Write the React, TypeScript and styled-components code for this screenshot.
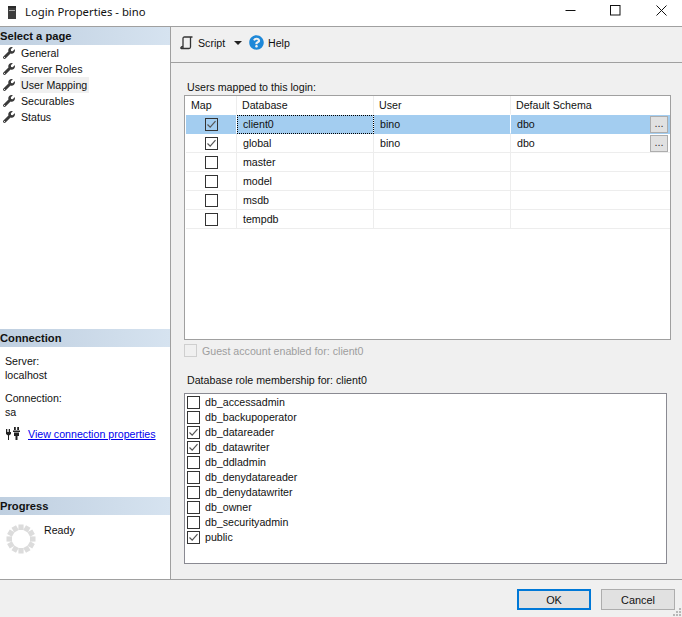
import React from "react";
import styled, { createGlobalStyle } from "styled-components";
import { FaWrench, FaQuestionCircle } from "react-icons/fa";

const Global = createGlobalStyle`
  html, body { margin: 0; padding: 0; background: #f0f0f0; }
  body { font: 10.65px/14px "Liberation Sans", Arial, sans-serif; color: #111; }
  * { box-sizing: border-box; }
`;
const Win = styled.div`
  width: 682px; height: 617px; display: flex; flex-direction: column; position: relative; overflow: hidden;
`;
const TitleBar = styled.header`
  height: 27px; flex: none; background: #fff; border-bottom: 1px solid #a0a0a0;
  display: flex; align-items: center; padding: 0 0 2px 8px;
`;
const AppGlyph = styled.div`
  width: 8px; height: 13px; background: #3c3c3c; border-top: 2px solid #2a2a2a; margin-right: 9px; flex: none; position: relative;
  &::after { content: ""; position: absolute; left: 1px; right: 1px; top: 2px; height: 1px; background: #aaa; }
`;
const TitleText = styled.div`
  flex: 1; font: 11.3px/16px "Noto Sans", "Open Sans", sans-serif; color: #111;
`;
const WinButtons = styled.div`
  display: flex; align-items: center; gap: 35px; padding: 0 15px 3px 0;
  svg { display: block; }
`;
const MaxWrap = styled.span`
  display: block; margin-left: -1px;
`;
const Body = styled.div`
  flex: 1; display: flex; min-height: 0;
`;
const Side = styled.aside`
  width: 171px; flex: none; background: #fff; border-right: 1px solid #a0a0a0; display: flex; flex-direction: column;
`;
const SideSection = styled.section<{ $h: number }>`
  height: ${p => p.$h}px; flex: none;
`;
const SideHead = styled.div`
  height: 18px; background: linear-gradient(90deg, #bfcfe0 0%, #d6e3f0 100%);
  font-size: 11.2px; font-weight: 700; line-height: 18px; color: #111;
`;
const NavList = styled.nav`
  display: flex; flex-direction: column;
`;
const NavRow = styled.div`
  height: 16px; display: flex; align-items: center; padding-left: 3px; gap: 5px;
  svg { color: #3a3a3a; flex: none; }
`;
const NavLabel = styled.span<{ $active?: boolean }>`
  padding: 0 2px 0 1px; line-height: 16px; ${p => p.$active && "background: #f0f0f0;"}
`;
const ConnBody = styled.div`
  padding: 7px 0 0 5px; display: flex; flex-direction: column;
`;
const InfoBlock = styled.div`
  margin-bottom: 9px; line-height: 14px;
`;
const LinkRow = styled.div`
  display: flex; align-items: center; gap: 7px; padding-left: 1px; margin-top: -1px;
`;
const LinkText = styled.a`
  color: #0000ee; text-decoration: underline; white-space: nowrap;
`;
const ProgBody = styled.div`
  display: flex; padding: 9px 0 0 6px; gap: 8px;
`;
const ReadyText = styled.span`
  line-height: 14px; margin-top: -1px;
`;
const Main = styled.main`
  flex: 1; min-width: 0; display: flex; flex-direction: column;
`;
const Toolbar = styled.div`
  height: 36px; flex: none; border-bottom: 1px solid #a0a0a0; display: flex; align-items: center; padding: 0 0 4px 9px;
`;
const ToolText = styled.span<{ $gap: number; $w?: number }>`
  margin-left: ${p => p.$gap}px; ${p => p.$w && `width: ${p.$w}px;`}
`;
const ArrowDown = styled.span`
  width: 0; height: 0; border-left: 4.5px solid transparent; border-right: 4.5px solid transparent; border-top: 4.5px solid #222;
  margin: 1px 7px 0 10px;
`;
const Content = styled.div`
  flex: 1; display: flex; flex-direction: column; padding: 17px 0 0 13px;
`;
const SectionLabel = styled.div`
  padding-left: 3px; line-height: 14px;
`;
const Grid = styled.div`
  margin-top: 1px; width: 487px; height: 245px; border: 1px solid #a0a0a0; background: #fff; padding-left: 1px; flex: none;
`;
const GridRow = styled.div<{ $sel?: boolean }>`
  display: grid; grid-template-columns: 51px 137px 137px 159px; height: 19px;
  width: 484px;
  ${p => p.$sel && "background: #a3cdf0;"}
`;
const Cell = styled.div<{ $sel?: boolean; $head?: boolean }>`
  display: flex; align-items: center; position: relative; padding-left: 6px;
  border-right: 1px solid ${p => p.$sel ? "#fff" : "#ededed"};
  border-bottom: 1px solid ${p => p.$sel ? "#a3cdf0" : "#ededed"};
  &:last-child { border-right: none; }
  ${p => p.$head && "border-bottom-color:#fff; padding-left: 5px;"}
`;
const FocusCell = styled(Cell)`
  outline: 1px dotted #000; outline-offset: -1px;
`;
const MapCell = styled(Cell)`
  justify-content: center; padding-left: 0;
`;
const Box = styled.span<{ $off?: boolean }>`
  width: 13px; height: 13px; flex: none; display: inline-flex; align-items: center; justify-content: center;
  border: 1px solid ${p => p.$off ? "#cfcfcf" : "#333"}; background: ${p => p.$off ? "#f0f0f0" : "transparent"};
`;
const Ellipsis = styled.button`
  position: absolute; right: 2px; top: 1px; width: 18px; height: 17px; padding: 0 0 3px; border: 1px solid #adadad; background: #e1e1e1;
  font: 11px/12px "Liberation Sans", sans-serif; color: #333; display: flex; align-items: flex-end; justify-content: center;
`;
const GuestRow = styled.div`
  display: flex; align-items: center; gap: 5px; margin-top: 4px; height: 13px; color: #9e9e9e;
`;
const RoleLabel = styled(SectionLabel)`
  margin-top: 16px;
`;
const RoleList = styled.div`
  margin-top: 6px; width: 483px; height: 171px; border: 1px solid #8a8a92; background: #fff; padding: 1px 0 0 2px; flex: none;
`;
const RoleRow = styled.div`
  height: 15px; display: flex; align-items: center; gap: 5px;
`;
const RoleName = styled.span`
  margin-top: -2px;
`;
const Footer = styled.footer`
  height: 38px; flex: none; border-top: 1px solid #a0a0a0; display: flex; justify-content: flex-end; align-items: flex-start;
  gap: 10px; padding: 9px 7px 0 0;
`;
const Btn = styled.button<{ $primary?: boolean }>`
  width: 74px; height: 21px; padding: 0; background: #e1e1e1; font: 10.9px/14px "Liberation Sans", sans-serif; color: #111;
  border: ${p => p.$primary ? "2px solid #0078d7" : "1px solid #adadad"};
`;
const Grip = styled.svg`
  position: absolute; right: 0; bottom: 0;
`;

const Check = () => (
  <svg width="11" height="11" viewBox="0 0 11 11"><path d="M1.5 5.5 L4.2 8.2 L9.5 2.2" fill="none" stroke="#555" strokeWidth="1.2" /></svg>
);
const Wrench = () => <FaWrench size={12} />;

const pages = ["General", "Server Roles", "User Mapping", "Securables", "Status"];
const dbs: [string, boolean, string, string][] = [
  ["client0", true, "bino", "dbo"], ["global", true, "bino", "dbo"], ["master", false, "", ""],
  ["model", false, "", ""], ["msdb", false, "", ""], ["tempdb", false, "", ""],
];
const roles: [string, boolean][] = [
  ["db_accessadmin", false], ["db_backupoperator", false], ["db_datareader", true], ["db_datawriter", true],
  ["db_ddladmin", false], ["db_denydatareader", false], ["db_denydatawriter", false], ["db_owner", false],
  ["db_securityadmin", false], ["public", true],
];

const Spinner = () => (
  <svg width="30" height="30" viewBox="0 0 30 30">
    {Array.from({ length: 12 }).map((_, i) => (
      <rect key={i} x="12.400" y="0.500" width="5.200" height="5.500" fill="#dcdcdc" transform={`rotate(${i * 30} 15 15)`} />
    ))}
  </svg>
);

export default function App() {
  return (
    <Win>
      <Global />
      <TitleBar>
        <AppGlyph />
        <TitleText>Login Properties - bino</TitleText>
        <WinButtons>
          <svg width="11" height="11" viewBox="0 0 11 11"><path d="M0.5 5.5H10.5" stroke="#111" /></svg>
          <MaxWrap><svg width="11" height="11" viewBox="0 0 11 11"><rect x="0.5" y="0.5" width="9.5" height="9.5" fill="none" stroke="#111" /></svg></MaxWrap>
          <svg width="11" height="11" viewBox="0 0 11 11"><path d="M0.5 0.5L10.5 10.5M10.5 0.5L0.5 10.5" stroke="#111" /></svg>
        </WinButtons>
      </TitleBar>
      <Body>
        <Side>
          <SideSection $h={302}>
            <SideHead>Select a page</SideHead>
            <NavList>
              {pages.map(p => (
                <NavRow key={p}><Wrench /><NavLabel $active={p === "User Mapping"}>{p}</NavLabel></NavRow>
              ))}
            </NavList>
          </SideSection>
          <SideSection $h={168}>
            <SideHead>Connection</SideHead>
            <ConnBody>
              <InfoBlock>Server:<br />localhost</InfoBlock>
              <InfoBlock>Connection:<br />sa</InfoBlock>
              <LinkRow>
                <svg width="15" height="14" viewBox="0 0 15 14" fill="#222">
                  <path d="M0 2h1.300v3h1.400V2H4v3h1v2L3 8.500V13H2V8.500L0 7z" />
                  <path d="M8 0h1.800v3H8zM11.200 0H13v3h-1.800zM7 3.500h7V5H7zM8 5.500h5V9h-1.500v4H9.500V9H8z" />
                </svg>
                <LinkText>View connection properties</LinkText>
              </LinkRow>
            </ConnBody>
          </SideSection>
          <SideSection $h={82}>
            <SideHead>Progress</SideHead>
            <ProgBody><Spinner /><ReadyText>Ready</ReadyText></ProgBody>
          </SideSection>
        </Side>
        <Main>
          <Toolbar>
            <svg width="13" height="14" viewBox="0 0 13 14" fill="none" stroke="#333" strokeWidth="1.300">
              <path d="M3 12.500V2.500C3 1.500 3.500 1 4.500 1H12.500" />
              <path d="M10.500 1V11C10.500 12 10 12.500 9 12.500H1" />
              <path d="M0.500 12.500C1 10.500 2 10.500 3 10.500" />
            </svg>
            <ToolText $gap={5} $w={26}>Script</ToolText>
            <ArrowDown />
            <FaQuestionCircle size={15} color="#1e88d8" />
            <ToolText $gap={4}>Help</ToolText>
          </Toolbar>
          <Content>
            <SectionLabel>Users mapped to this login:</SectionLabel>
            <Grid>
              <GridRow>
                <Cell $head>Map</Cell><Cell $head>Database</Cell><Cell $head>User</Cell><Cell $head>Default Schema</Cell>
              </GridRow>
              {dbs.map(([d, c, u, s], i) => {
                const sel = i === 0;
                const DbCell = sel ? FocusCell : Cell;
                return (
                  <GridRow key={d} $sel={sel}>
                    <MapCell $sel={sel}><Box>{c && <Check />}</Box></MapCell>
                    <DbCell $sel={sel}>{d}</DbCell>
                    <Cell $sel={sel}>{u}</Cell>
                    <Cell $sel={sel}>{s}{s && <Ellipsis>...</Ellipsis>}</Cell>
                  </GridRow>
                );
              })}
            </Grid>
            <GuestRow><Box $off />Guest account enabled for: client0</GuestRow>
            <RoleLabel>Database role membership for: client0</RoleLabel>
            <RoleList>
              {roles.map(([r, c]) => (
                <RoleRow key={r}><Box>{c && <Check />}</Box><RoleName>{r}</RoleName></RoleRow>
              ))}
            </RoleList>
          </Content>
        </Main>
      </Body>
      <Footer>
        <Btn $primary>OK</Btn>
        <Btn>Cancel</Btn>
      </Footer>
      <Grip width="10" height="10" viewBox="0 0 10 10" fill="#b8b8b8">
        <rect x="7" y="1" width="2" height="2" /><rect x="4" y="4" width="2" height="2" /><rect x="7" y="4" width="2" height="2" />
        <rect x="1" y="7" width="2" height="2" /><rect x="4" y="7" width="2" height="2" /><rect x="7" y="7" width="2" height="2" />
      </Grip>
    </Win>
  );
}
